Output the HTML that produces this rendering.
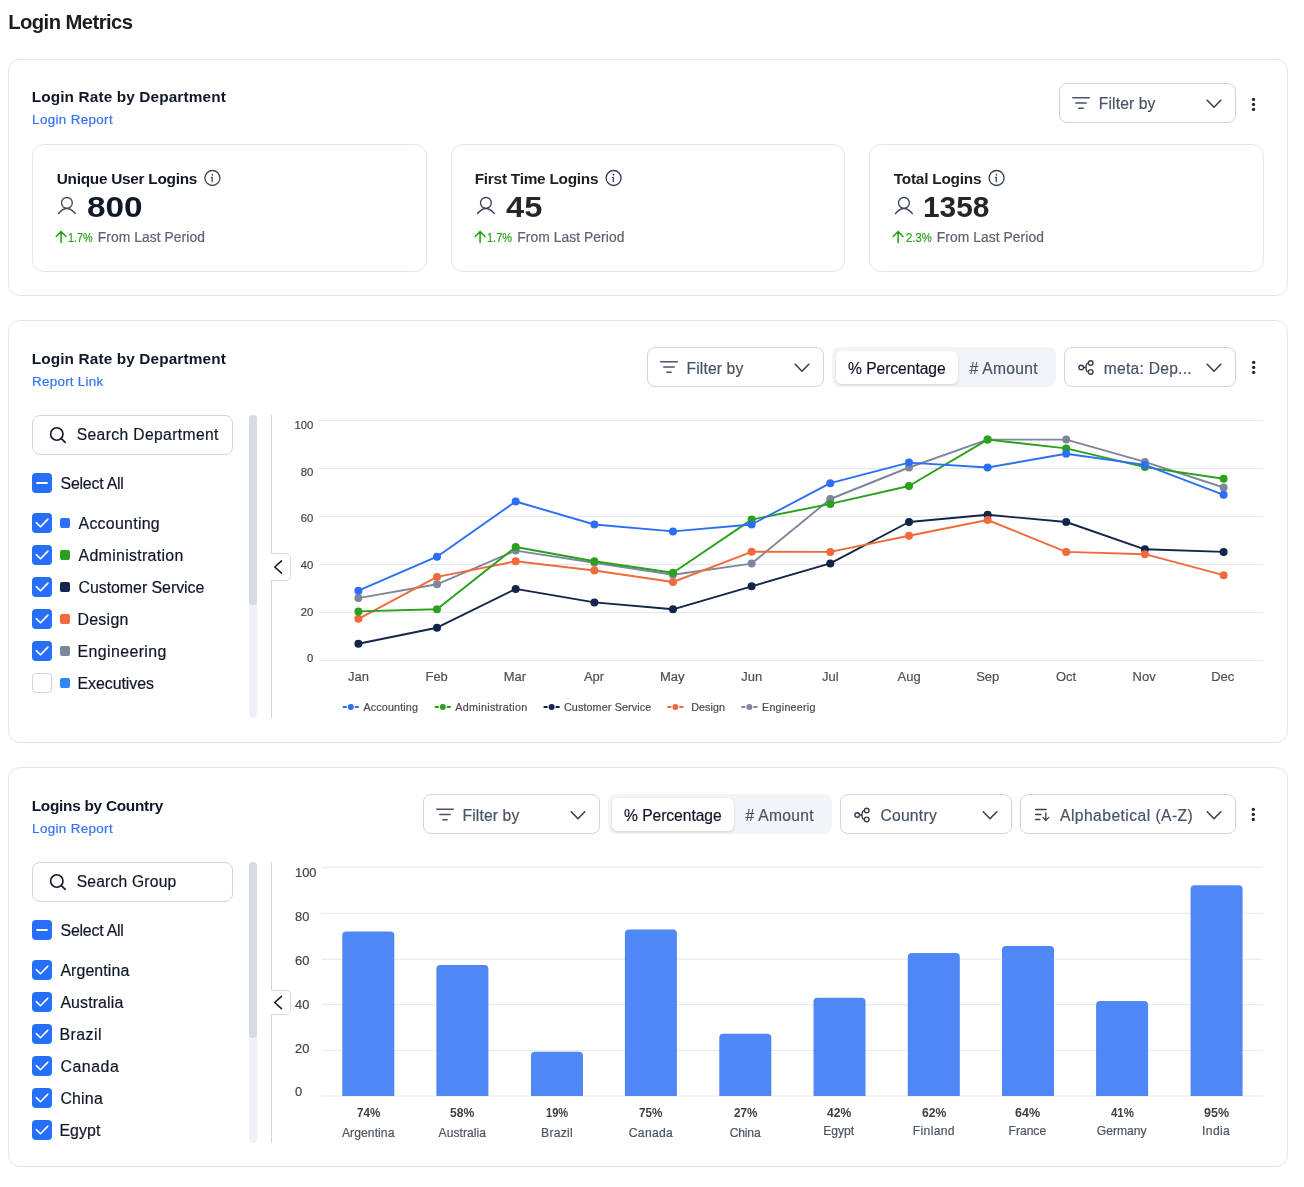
<!DOCTYPE html>
<html><head><meta charset="utf-8"><title>Login Metrics</title>
<style>
html,body{margin:0;padding:0;background:#fff;}
body{width:1304px;height:1187px;position:relative;overflow:hidden;font-family:'Liberation Sans', sans-serif;}
.t{position:absolute;white-space:nowrap;}
.r{-webkit-text-stroke:0.2px currentColor;}
svg.ov{position:absolute;left:0;top:0;}
.tl{position:absolute;left:0;top:0;width:1304px;height:1187px;will-change:transform;}
</style></head><body>
<div style="position:absolute;left:8px;top:59px;width:1280px;height:237px;box-sizing:border-box;border:1px solid #e4e4e4;border-radius:12px;background:#fff;"></div>
<div style="position:absolute;left:8px;top:320px;width:1280px;height:423px;box-sizing:border-box;border:1px solid #e4e4e4;border-radius:12px;background:#fff;"></div>
<div style="position:absolute;left:8px;top:767px;width:1280px;height:400px;box-sizing:border-box;border:1px solid #e4e4e4;border-radius:12px;background:#fff;"></div>
<div style="position:absolute;left:1059px;top:83px;width:177px;height:40px;box-sizing:border-box;border:1px solid #d0d5dd;border-radius:8px;background:#fff"></div>
<div style="position:absolute;left:32px;top:144px;width:395px;height:128px;box-sizing:border-box;border:1px solid #e4e4e4;border-radius:12px;background:#fff;"></div>
<div style="position:absolute;left:451px;top:144px;width:394px;height:128px;box-sizing:border-box;border:1px solid #e4e4e4;border-radius:12px;background:#fff;"></div>
<div style="position:absolute;left:869px;top:144px;width:395px;height:128px;box-sizing:border-box;border:1px solid #e4e4e4;border-radius:12px;background:#fff;"></div>
<div style="position:absolute;left:647px;top:347px;width:177px;height:40px;box-sizing:border-box;border:1px solid #d0d5dd;border-radius:8px;background:#fff"></div>
<div style="position:absolute;left:832px;top:347px;width:224px;height:40px;border-radius:8px;background:#f2f4f7"></div>
<div style="position:absolute;left:836px;top:351px;width:122px;height:33px;border-radius:6px;background:#fff;box-shadow:0 1px 3px rgba(16,24,40,0.10),0 1px 2px rgba(16,24,40,0.06)"></div>
<div style="position:absolute;left:1064px;top:347px;width:172px;height:40px;box-sizing:border-box;border:1px solid #d0d5dd;border-radius:8px;background:#fff"></div>
<div style="position:absolute;left:32px;top:415px;width:201px;height:40px;box-sizing:border-box;border:1px solid #d0d5dd;border-radius:8px;background:#fff"></div>
<div style="position:absolute;left:32px;top:673px;width:20px;height:20px;box-sizing:border-box;border:1px solid #d0d5dd;border-radius:4px;background:#fff"></div>
<div style="position:absolute;left:249px;top:415px;width:8px;height:303px;border-radius:4px;background:#eef1f8"></div>
<div style="position:absolute;left:249px;top:415px;width:8px;height:190px;border-radius:4px;background:#d5dae3"></div>
<div style="position:absolute;left:271px;top:415px;width:1px;height:303px;background:#d0d5dd"></div>
<div style="position:absolute;left:271px;top:553px;width:20px;height:28px;box-sizing:border-box;border:1px solid #d5d9e2;border-left:none;border-radius:0 5px 5px 0;background:#fff"></div>
<div style="position:absolute;left:423px;top:794px;width:177px;height:40px;box-sizing:border-box;border:1px solid #d0d5dd;border-radius:8px;background:#fff"></div>
<div style="position:absolute;left:608px;top:794px;width:224px;height:40px;border-radius:8px;background:#f2f4f7"></div>
<div style="position:absolute;left:612px;top:798px;width:122px;height:33px;border-radius:6px;background:#fff;box-shadow:0 1px 3px rgba(16,24,40,0.10),0 1px 2px rgba(16,24,40,0.06)"></div>
<div style="position:absolute;left:840px;top:794px;width:172px;height:40px;box-sizing:border-box;border:1px solid #d0d5dd;border-radius:8px;background:#fff"></div>
<div style="position:absolute;left:1020px;top:794px;width:216px;height:40px;box-sizing:border-box;border:1px solid #d0d5dd;border-radius:8px;background:#fff"></div>
<div style="position:absolute;left:32px;top:862px;width:201px;height:40px;box-sizing:border-box;border:1px solid #d0d5dd;border-radius:8px;background:#fff"></div>
<div style="position:absolute;left:249px;top:862px;width:8px;height:281px;border-radius:4px;background:#eef1f8"></div>
<div style="position:absolute;left:249px;top:862px;width:8px;height:176px;border-radius:4px;background:#d5dae3"></div>
<div style="position:absolute;left:271px;top:862px;width:1px;height:281px;background:#d0d5dd"></div>
<div style="position:absolute;left:271px;top:990px;width:20px;height:25px;box-sizing:border-box;border:1px solid #d5d9e2;border-left:none;border-radius:0 5px 5px 0;background:#fff"></div>
<svg class="ov" width="1304" height="1187" viewBox="0 0 1304 1187">
<g stroke="#475467" stroke-width="1.6" stroke-linecap="round"><line x1="1072.8" y1="97.8" x2="1089.2" y2="97.8"/><line x1="1075.8" y1="103" x2="1086.2" y2="103"/><line x1="1078.8" y1="108.2" x2="1083.2" y2="108.2"/></g>
<polyline points="1207.2,100.3 1214.0,107.2 1220.8,100.3" fill="none" stroke="#344054" stroke-width="1.6" stroke-linecap="round" stroke-linejoin="round"/>
<circle cx="1253.5" cy="99.4" r="1.65" fill="#262626"/><circle cx="1253.5" cy="104.4" r="1.65" fill="#262626"/><circle cx="1253.5" cy="109.4" r="1.65" fill="#262626"/>
<circle cx="212.4" cy="178" r="7.5" fill="none" stroke="#4e4643" stroke-width="1.3"/><circle cx="212.3" cy="174.7" r="0.85" fill="#4e4643"/><path d="M211.3 177.3 L212.1 177.5 V181.7" fill="none" stroke="#4e4643" stroke-width="1.3" stroke-linecap="round" stroke-linejoin="round"/>
<circle cx="66.9" cy="202.9" r="5.4" fill="none" stroke="#4e4643" stroke-width="1.3"/><path d="M58.50000000000001 213.5 Q66.9 203.5 75.30000000000001 213.5" fill="none" stroke="#4e4643" stroke-width="1.3" stroke-linecap="round"/>
<path d="M61.1 242.6 V231.6 M56.2 236.4 L61.1 231.4 L66.0 236.4" fill="none" stroke="#22a012" stroke-width="1.5" stroke-linecap="round" stroke-linejoin="round"/>
<circle cx="613.6" cy="178" r="7.5" fill="none" stroke="#344054" stroke-width="1.3"/><circle cx="613.5" cy="174.7" r="0.85" fill="#344054"/><path d="M612.5 177.3 L613.3000000000001 177.5 V181.7" fill="none" stroke="#344054" stroke-width="1.3" stroke-linecap="round" stroke-linejoin="round"/>
<circle cx="485.9" cy="202.9" r="5.4" fill="none" stroke="#344054" stroke-width="1.3"/><path d="M477.5 213.5 Q485.9 203.5 494.29999999999995 213.5" fill="none" stroke="#344054" stroke-width="1.3" stroke-linecap="round"/>
<path d="M480.1 242.6 V231.6 M475.20000000000005 236.4 L480.1 231.4 L485.0 236.4" fill="none" stroke="#22a012" stroke-width="1.5" stroke-linecap="round" stroke-linejoin="round"/>
<circle cx="996.6" cy="178" r="7.5" fill="none" stroke="#344054" stroke-width="1.3"/><circle cx="996.5" cy="174.7" r="0.85" fill="#344054"/><path d="M995.5 177.3 L996.3000000000001 177.5 V181.7" fill="none" stroke="#344054" stroke-width="1.3" stroke-linecap="round" stroke-linejoin="round"/>
<circle cx="903.9" cy="202.9" r="5.4" fill="none" stroke="#344054" stroke-width="1.3"/><path d="M895.5 213.5 Q903.9 203.5 912.3 213.5" fill="none" stroke="#344054" stroke-width="1.3" stroke-linecap="round"/>
<path d="M898.1 242.6 V231.6 M893.2 236.4 L898.1 231.4 L903.0 236.4" fill="none" stroke="#22a012" stroke-width="1.5" stroke-linecap="round" stroke-linejoin="round"/>
<g stroke="#475467" stroke-width="1.6" stroke-linecap="round"><line x1="660.8" y1="361.8" x2="677.2" y2="361.8"/><line x1="663.8" y1="367" x2="674.2" y2="367"/><line x1="666.8" y1="372.2" x2="671.2" y2="372.2"/></g>
<polyline points="795.2,364.3 802.0,371.2 808.8000000000001,364.3" fill="none" stroke="#344054" stroke-width="1.6" stroke-linecap="round" stroke-linejoin="round"/>
<g fill="none" stroke="#344054" stroke-width="1.4"><circle cx="1081.2" cy="367.5" r="2.3"/><circle cx="1090.7" cy="363.1" r="2.3"/><circle cx="1090.7" cy="371.9" r="2.3"/><path d="M1083.5 367.5 H1085.7 M1088.4 363.1 C1086.0 363.1 1086.0 367.5 1086.0 367.5 C1086.0 367.5 1086.0 371.9 1088.4 371.9"/></g>
<polyline points="1207.2,364.3 1214.0,371.2 1220.8,364.3" fill="none" stroke="#344054" stroke-width="1.6" stroke-linecap="round" stroke-linejoin="round"/>
<circle cx="1253.7" cy="362.4" r="1.65" fill="#262626"/><circle cx="1253.7" cy="367.4" r="1.65" fill="#262626"/><circle cx="1253.7" cy="372.4" r="1.65" fill="#262626"/>
<circle cx="56.8" cy="434" r="6.2" fill="none" stroke="#101828" stroke-width="1.6"/><line x1="61.4" y1="438.6" x2="65.2" y2="442.4" stroke="#101828" stroke-width="1.6" stroke-linecap="round"/>
<rect x="32" y="473" width="20" height="20" rx="4" fill="#276ef8"/><line x1="37" y1="483" x2="47" y2="483" stroke="#fff" stroke-width="1.8" stroke-linecap="round"/>
<rect x="32" y="513" width="20" height="20" rx="4" fill="#276ef8"/><polyline points="36.3,522.6 40.5,526.8 47.9,519.1" fill="none" stroke="#fff" stroke-width="1.6" stroke-linecap="round" stroke-linejoin="round"/>
<rect x="60" y="518" width="10" height="10" rx="2" fill="#2a6ff6"/>
<rect x="32" y="545" width="20" height="20" rx="4" fill="#276ef8"/><polyline points="36.3,554.6 40.5,558.8 47.9,551.1" fill="none" stroke="#fff" stroke-width="1.6" stroke-linecap="round" stroke-linejoin="round"/>
<rect x="60" y="550" width="10" height="10" rx="2" fill="#2aa01c"/>
<rect x="32" y="577" width="20" height="20" rx="4" fill="#276ef8"/><polyline points="36.3,586.6 40.5,590.8 47.9,583.1" fill="none" stroke="#fff" stroke-width="1.6" stroke-linecap="round" stroke-linejoin="round"/>
<rect x="60" y="582" width="10" height="10" rx="2" fill="#13254a"/>
<rect x="32" y="609" width="20" height="20" rx="4" fill="#276ef8"/><polyline points="36.3,618.6 40.5,622.8 47.9,615.1" fill="none" stroke="#fff" stroke-width="1.6" stroke-linecap="round" stroke-linejoin="round"/>
<rect x="60" y="614" width="10" height="10" rx="2" fill="#f06a3c"/>
<rect x="32" y="641" width="20" height="20" rx="4" fill="#276ef8"/><polyline points="36.3,650.6 40.5,654.8 47.9,647.1" fill="none" stroke="#fff" stroke-width="1.6" stroke-linecap="round" stroke-linejoin="round"/>
<rect x="60" y="646" width="10" height="10" rx="2" fill="#7d879b"/>
<rect x="60" y="678" width="10" height="10" rx="2" fill="#2e86f7"/>
<polyline points="281.5,560.9 274.7,567.0 281.5,573.1" fill="none" stroke="#101828" stroke-width="1.5" stroke-linecap="round" stroke-linejoin="round"/>
<line x1="319" y1="420.5" x2="1263" y2="420.5" stroke="#e5e7eb" stroke-width="1"/>
<line x1="319" y1="468.5" x2="1263" y2="468.5" stroke="#e5e7eb" stroke-width="1"/>
<line x1="319" y1="516.5" x2="1263" y2="516.5" stroke="#e5e7eb" stroke-width="1"/>
<line x1="319" y1="564.5" x2="1263" y2="564.5" stroke="#e5e7eb" stroke-width="1"/>
<line x1="319" y1="612.5" x2="1263" y2="612.5" stroke="#e5e7eb" stroke-width="1"/>
<line x1="319" y1="660.5" x2="1263" y2="660.5" stroke="#e5e7eb" stroke-width="1"/>
<polyline points="358.4,598.1 437.0,584.3 515.7,550.6 594.4,562.8 673.0,574.8 751.6,563.6 830.3,499.0 909.0,467.5 987.6,439.6 1066.2,439.6 1144.9,461.9 1223.6,487.5" fill="none" stroke="#7d879b" stroke-width="1.9" stroke-linejoin="round"/>
<circle cx="358.4" cy="598.1" r="4" fill="#7d879b"/><circle cx="437.0" cy="584.3" r="4" fill="#7d879b"/><circle cx="515.7" cy="550.6" r="4" fill="#7d879b"/><circle cx="594.4" cy="562.8" r="4" fill="#7d879b"/><circle cx="673.0" cy="574.8" r="4" fill="#7d879b"/><circle cx="751.6" cy="563.6" r="4" fill="#7d879b"/><circle cx="830.3" cy="499.0" r="4" fill="#7d879b"/><circle cx="909.0" cy="467.5" r="4" fill="#7d879b"/><circle cx="987.6" cy="439.6" r="4" fill="#7d879b"/><circle cx="1066.2" cy="439.6" r="4" fill="#7d879b"/><circle cx="1144.9" cy="461.9" r="4" fill="#7d879b"/><circle cx="1223.6" cy="487.5" r="4" fill="#7d879b"/>
<polyline points="358.4,643.8 437.0,627.7 515.7,588.9 594.4,602.4 673.0,609.3 751.6,586.3 830.3,563.4 909.0,522.0 987.6,514.8 1066.2,522.0 1144.9,549.3 1223.6,551.9" fill="none" stroke="#13254a" stroke-width="1.9" stroke-linejoin="round"/>
<circle cx="358.4" cy="643.8" r="4" fill="#13254a"/><circle cx="437.0" cy="627.7" r="4" fill="#13254a"/><circle cx="515.7" cy="588.9" r="4" fill="#13254a"/><circle cx="594.4" cy="602.4" r="4" fill="#13254a"/><circle cx="673.0" cy="609.3" r="4" fill="#13254a"/><circle cx="751.6" cy="586.3" r="4" fill="#13254a"/><circle cx="830.3" cy="563.4" r="4" fill="#13254a"/><circle cx="909.0" cy="522.0" r="4" fill="#13254a"/><circle cx="987.6" cy="514.8" r="4" fill="#13254a"/><circle cx="1066.2" cy="522.0" r="4" fill="#13254a"/><circle cx="1144.9" cy="549.3" r="4" fill="#13254a"/><circle cx="1223.6" cy="551.9" r="4" fill="#13254a"/>
<polyline points="358.4,618.8 437.0,576.9 515.7,561.3 594.4,570.5 673.0,582.0 751.6,551.8 830.3,551.9 909.0,535.8 987.6,520.0 1066.2,551.9 1144.9,554.2 1223.6,575.2" fill="none" stroke="#f06a3c" stroke-width="1.9" stroke-linejoin="round"/>
<circle cx="358.4" cy="618.8" r="4" fill="#f06a3c"/><circle cx="437.0" cy="576.9" r="4" fill="#f06a3c"/><circle cx="515.7" cy="561.3" r="4" fill="#f06a3c"/><circle cx="594.4" cy="570.5" r="4" fill="#f06a3c"/><circle cx="673.0" cy="582.0" r="4" fill="#f06a3c"/><circle cx="751.6" cy="551.8" r="4" fill="#f06a3c"/><circle cx="830.3" cy="551.9" r="4" fill="#f06a3c"/><circle cx="909.0" cy="535.8" r="4" fill="#f06a3c"/><circle cx="987.6" cy="520.0" r="4" fill="#f06a3c"/><circle cx="1066.2" cy="551.9" r="4" fill="#f06a3c"/><circle cx="1144.9" cy="554.2" r="4" fill="#f06a3c"/><circle cx="1223.6" cy="575.2" r="4" fill="#f06a3c"/>
<polyline points="358.4,611.4 437.0,609.3 515.7,547.0 594.4,561.3 673.0,572.8 751.6,519.6 830.3,503.9 909.0,486.0 987.6,439.6 1066.2,448.4 1144.9,467.1 1223.6,478.7" fill="none" stroke="#2aa01c" stroke-width="1.9" stroke-linejoin="round"/>
<circle cx="358.4" cy="611.4" r="4" fill="#2aa01c"/><circle cx="437.0" cy="609.3" r="4" fill="#2aa01c"/><circle cx="515.7" cy="547.0" r="4" fill="#2aa01c"/><circle cx="594.4" cy="561.3" r="4" fill="#2aa01c"/><circle cx="673.0" cy="572.8" r="4" fill="#2aa01c"/><circle cx="751.6" cy="519.6" r="4" fill="#2aa01c"/><circle cx="830.3" cy="503.9" r="4" fill="#2aa01c"/><circle cx="909.0" cy="486.0" r="4" fill="#2aa01c"/><circle cx="987.6" cy="439.6" r="4" fill="#2aa01c"/><circle cx="1066.2" cy="448.4" r="4" fill="#2aa01c"/><circle cx="1144.9" cy="467.1" r="4" fill="#2aa01c"/><circle cx="1223.6" cy="478.7" r="4" fill="#2aa01c"/>
<polyline points="358.4,590.7 437.0,556.7 515.7,501.5 594.4,524.5 673.0,531.4 751.6,524.5 830.3,483.2 909.0,462.6 987.6,467.5 1066.2,453.7 1144.9,464.9 1223.6,494.8" fill="none" stroke="#2a6ff6" stroke-width="1.9" stroke-linejoin="round"/>
<circle cx="358.4" cy="590.7" r="4" fill="#2a6ff6"/><circle cx="437.0" cy="556.7" r="4" fill="#2a6ff6"/><circle cx="515.7" cy="501.5" r="4" fill="#2a6ff6"/><circle cx="594.4" cy="524.5" r="4" fill="#2a6ff6"/><circle cx="673.0" cy="531.4" r="4" fill="#2a6ff6"/><circle cx="751.6" cy="524.5" r="4" fill="#2a6ff6"/><circle cx="830.3" cy="483.2" r="4" fill="#2a6ff6"/><circle cx="909.0" cy="462.6" r="4" fill="#2a6ff6"/><circle cx="987.6" cy="467.5" r="4" fill="#2a6ff6"/><circle cx="1066.2" cy="453.7" r="4" fill="#2a6ff6"/><circle cx="1144.9" cy="464.9" r="4" fill="#2a6ff6"/><circle cx="1223.6" cy="494.8" r="4" fill="#2a6ff6"/>
<g stroke="#2a6ff6" stroke-width="2"><line x1="342.8" y1="707" x2="346.8" y2="707"/><line x1="354.8" y1="707" x2="358.8" y2="707"/></g><circle cx="350.8" cy="707" r="3" fill="#2a6ff6"/>
<g stroke="#2aa01c" stroke-width="2"><line x1="434.8" y1="707" x2="438.8" y2="707"/><line x1="446.8" y1="707" x2="450.8" y2="707"/></g><circle cx="442.8" cy="707" r="3" fill="#2aa01c"/>
<g stroke="#13254a" stroke-width="2"><line x1="543.6" y1="707" x2="547.6" y2="707"/><line x1="555.6" y1="707" x2="559.6" y2="707"/></g><circle cx="551.6" cy="707" r="3" fill="#13254a"/>
<g stroke="#f06a3c" stroke-width="2"><line x1="667.4" y1="707" x2="671.4" y2="707"/><line x1="679.4" y1="707" x2="683.4" y2="707"/></g><circle cx="675.4" cy="707" r="3" fill="#f06a3c"/>
<g stroke="#7d879b" stroke-width="2"><line x1="741.4" y1="707" x2="745.4" y2="707"/><line x1="753.4" y1="707" x2="757.4" y2="707"/></g><circle cx="749.4" cy="707" r="3" fill="#7d879b"/>
<g stroke="#475467" stroke-width="1.6" stroke-linecap="round"><line x1="436.8" y1="809.3" x2="453.2" y2="809.3"/><line x1="439.8" y1="814.5" x2="450.2" y2="814.5"/><line x1="442.8" y1="819.7" x2="447.2" y2="819.7"/></g>
<polyline points="571.2,811.8 578.0,818.6999999999999 584.8000000000001,811.8" fill="none" stroke="#344054" stroke-width="1.6" stroke-linecap="round" stroke-linejoin="round"/>
<g fill="none" stroke="#344054" stroke-width="1.4"><circle cx="857.2" cy="815" r="2.3"/><circle cx="866.7" cy="810.6" r="2.3"/><circle cx="866.7" cy="819.4" r="2.3"/><path d="M859.5 815 H861.7 M864.4000000000001 810.6 C862.0 810.6 862.0 815 862.0 815 C862.0 815 862.0 819.4 864.4000000000001 819.4"/></g>
<polyline points="983.2,811.8 990.0,818.6999999999999 996.8000000000001,811.8" fill="none" stroke="#344054" stroke-width="1.6" stroke-linecap="round" stroke-linejoin="round"/>
<g fill="none" stroke="#344054" stroke-width="1.3" stroke-linecap="round" stroke-linejoin="round"><line x1="1035.6" y1="809.5" x2="1046.2" y2="809.5"/><line x1="1035.6" y1="814.5" x2="1041" y2="814.5"/><line x1="1035.6" y1="819.5" x2="1040" y2="819.5"/><path d="M1045.8 812.8 V820.4 M1042.9 817.4 L1045.8 820.4 L1048.8 817.4"/></g>
<polyline points="1207.2,811.8 1214.0,818.6999999999999 1220.8,811.8" fill="none" stroke="#344054" stroke-width="1.6" stroke-linecap="round" stroke-linejoin="round"/>
<circle cx="1253.3" cy="809.4" r="1.65" fill="#262626"/><circle cx="1253.3" cy="814.4" r="1.65" fill="#262626"/><circle cx="1253.3" cy="819.4" r="1.65" fill="#262626"/>
<circle cx="56.8" cy="881" r="6.2" fill="none" stroke="#101828" stroke-width="1.6"/><line x1="61.4" y1="885.6" x2="65.2" y2="889.4" stroke="#101828" stroke-width="1.6" stroke-linecap="round"/>
<rect x="32" y="920" width="20" height="20" rx="4" fill="#276ef8"/><line x1="37" y1="930" x2="47" y2="930" stroke="#fff" stroke-width="1.8" stroke-linecap="round"/>
<rect x="32" y="960" width="20" height="20" rx="4" fill="#276ef8"/><polyline points="36.3,969.6 40.5,973.8 47.9,966.1" fill="none" stroke="#fff" stroke-width="1.6" stroke-linecap="round" stroke-linejoin="round"/>
<rect x="32" y="992" width="20" height="20" rx="4" fill="#276ef8"/><polyline points="36.3,1001.6 40.5,1005.8 47.9,998.1" fill="none" stroke="#fff" stroke-width="1.6" stroke-linecap="round" stroke-linejoin="round"/>
<rect x="32" y="1024" width="20" height="20" rx="4" fill="#276ef8"/><polyline points="36.3,1033.6 40.5,1037.8 47.9,1030.1" fill="none" stroke="#fff" stroke-width="1.6" stroke-linecap="round" stroke-linejoin="round"/>
<rect x="32" y="1056" width="20" height="20" rx="4" fill="#276ef8"/><polyline points="36.3,1065.6 40.5,1069.8 47.9,1062.1" fill="none" stroke="#fff" stroke-width="1.6" stroke-linecap="round" stroke-linejoin="round"/>
<rect x="32" y="1088" width="20" height="20" rx="4" fill="#276ef8"/><polyline points="36.3,1097.6 40.5,1101.8 47.9,1094.1" fill="none" stroke="#fff" stroke-width="1.6" stroke-linecap="round" stroke-linejoin="round"/>
<rect x="32" y="1120" width="20" height="20" rx="4" fill="#276ef8"/><polyline points="36.3,1129.6 40.5,1133.8 47.9,1126.1" fill="none" stroke="#fff" stroke-width="1.6" stroke-linecap="round" stroke-linejoin="round"/>
<polyline points="281.5,996.4 274.7,1002.5 281.5,1008.6" fill="none" stroke="#101828" stroke-width="1.5" stroke-linecap="round" stroke-linejoin="round"/>
<line x1="321.6" y1="867.2" x2="1263" y2="867.2" stroke="#e5e7eb" stroke-width="1"/>
<line x1="321.6" y1="913.2" x2="1263" y2="913.2" stroke="#e5e7eb" stroke-width="1"/>
<line x1="321.6" y1="959.2" x2="1263" y2="959.2" stroke="#e5e7eb" stroke-width="1"/>
<line x1="321.6" y1="1004.7" x2="1263" y2="1004.7" stroke="#e5e7eb" stroke-width="1"/>
<line x1="321.6" y1="1050.4" x2="1263" y2="1050.4" stroke="#e5e7eb" stroke-width="1"/>
<line x1="321.6" y1="1096" x2="1263" y2="1096" stroke="#e5e7eb" stroke-width="1"/>
<path d="M342.3 1096 V935.4 Q342.3 931.4 346.3 931.4 H390.3 Q394.3 931.4 394.3 935.4 V1096 Z" fill="#4f87f6"/>
<path d="M436.4 1096 V969 Q436.4 965 440.4 965 H484.4 Q488.4 965 488.4 969 V1096 Z" fill="#4f87f6"/>
<path d="M531 1096 V1055.7 Q531 1051.7 535 1051.7 H579 Q583 1051.7 583 1055.7 V1096 Z" fill="#4f87f6"/>
<path d="M624.9 1096 V933.4 Q624.9 929.4 628.9 929.4 H672.9 Q676.9 929.4 676.9 933.4 V1096 Z" fill="#4f87f6"/>
<path d="M719.3 1096 V1037.7 Q719.3 1033.7 723.3 1033.7 H767.3 Q771.3 1033.7 771.3 1037.7 V1096 Z" fill="#4f87f6"/>
<path d="M813.5 1096 V1001.8 Q813.5 997.8 817.5 997.8 H861.5 Q865.5 997.8 865.5 1001.8 V1096 Z" fill="#4f87f6"/>
<path d="M907.8 1096 V956.9 Q907.8 952.9 911.8 952.9 H955.8 Q959.8 952.9 959.8 956.9 V1096 Z" fill="#4f87f6"/>
<path d="M1002 1096 V949.9 Q1002 945.9 1006 945.9 H1050 Q1054 945.9 1054 949.9 V1096 Z" fill="#4f87f6"/>
<path d="M1096.1 1096 V1005.1 Q1096.1 1001.1 1100.1 1001.1 H1144.1 Q1148.1 1001.1 1148.1 1005.1 V1096 Z" fill="#4f87f6"/>
<path d="M1190.6 1096 V889.2 Q1190.6 885.2 1194.6 885.2 H1238.6 Q1242.6 885.2 1242.6 889.2 V1096 Z" fill="#4f87f6"/>
</svg>
<div class="tl">
<div class="t" style="left:8.20px;top:11.95px;font-size:20.251px;line-height:20.251px;font-weight:700;color:#1c1c1e;letter-spacing:-0.573px;">Login Metrics</div>
<div class="t" style="left:31.70px;top:88.89px;font-size:15.363px;line-height:15.363px;font-weight:700;color:#101828;letter-spacing:0.128px;">Login Rate by Department</div>
<div class="t r" style="left:32.10px;top:113.45px;font-size:13.408px;line-height:13.408px;font-weight:400;color:#3373f4;letter-spacing:0.350px;">Login Report</div>
<div class="t r" style="left:1098.80px;top:96.06px;font-size:15.642px;line-height:15.642px;font-weight:400;color:#475467;letter-spacing:0.131px;">Filter by</div>
<div class="t" style="left:56.70px;top:170.99px;font-size:15.363px;line-height:15.363px;font-weight:700;color:#101828;letter-spacing:-0.261px;">Unique User Logins</div>
<div class="t" style="left:87.00px;top:193.32px;font-size:28.911px;line-height:28.911px;font-weight:700;color:#101828;letter-spacing:0.000px;transform:scaleX(1.1537);transform-origin:0 0;">800</div>
<div class="t r" style="left:67.98px;top:231.48px;font-size:13.128px;line-height:13.128px;font-weight:400;color:#26a116;letter-spacing:0.000px;transform:scaleX(0.8212);transform-origin:0 0;">1.7%</div>
<div class="t r" style="left:97.80px;top:231.09px;font-size:13.827px;line-height:13.827px;font-weight:400;color:#5b6270;letter-spacing:0.077px;">From Last Period</div>
<div class="t" style="left:474.70px;top:170.99px;font-size:15.363px;line-height:15.363px;font-weight:700;color:#1f1f1f;letter-spacing:-0.243px;">First Time Logins</div>
<div class="t" style="left:506.00px;top:193.32px;font-size:28.911px;line-height:28.911px;font-weight:700;color:#262626;letter-spacing:0.000px;transform:scaleX(1.1286);transform-origin:0 0;">45</div>
<div class="t r" style="left:486.96px;top:231.48px;font-size:13.128px;line-height:13.128px;font-weight:400;color:#26a116;letter-spacing:0.000px;transform:scaleX(0.8384);transform-origin:0 0;">1.7%</div>
<div class="t r" style="left:517.30px;top:231.09px;font-size:13.827px;line-height:13.827px;font-weight:400;color:#5b6270;letter-spacing:0.077px;">From Last Period</div>
<div class="t" style="left:893.70px;top:170.99px;font-size:15.363px;line-height:15.363px;font-weight:700;color:#1f1f1f;letter-spacing:-0.210px;">Total Logins</div>
<div class="t" style="left:922.97px;top:193.32px;font-size:28.911px;line-height:28.911px;font-weight:700;color:#262626;letter-spacing:0.000px;transform:scaleX(1.0312);transform-origin:0 0;">1358</div>
<div class="t r" style="left:905.80px;top:231.48px;font-size:13.128px;line-height:13.128px;font-weight:400;color:#26a116;letter-spacing:0.000px;transform:scaleX(0.8602);transform-origin:0 0;">2.3%</div>
<div class="t r" style="left:936.80px;top:231.09px;font-size:13.827px;line-height:13.827px;font-weight:400;color:#5b6270;letter-spacing:0.077px;">From Last Period</div>
<div class="t" style="left:31.70px;top:350.99px;font-size:15.363px;line-height:15.363px;font-weight:700;color:#101828;letter-spacing:0.128px;">Login Rate by Department</div>
<div class="t r" style="left:32.10px;top:375.05px;font-size:13.408px;line-height:13.408px;font-weight:400;color:#3373f4;letter-spacing:0.262px;">Report Link</div>
<div class="t r" style="left:686.60px;top:360.56px;font-size:15.642px;line-height:15.642px;font-weight:400;color:#475467;letter-spacing:0.131px;">Filter by</div>
<div class="t r" style="left:848.00px;top:360.56px;font-size:15.642px;line-height:15.642px;font-weight:400;color:#101828;letter-spacing:-0.042px;">% Percentage</div>
<div class="t r" style="left:969.50px;top:360.56px;font-size:15.642px;line-height:15.642px;font-weight:400;color:#475467;letter-spacing:0.280px;"># Amount</div>
<div class="t r" style="left:1103.80px;top:360.56px;font-size:15.642px;line-height:15.642px;font-weight:400;color:#475467;letter-spacing:0.249px;">meta: Dep...</div>
<div class="t r" style="left:76.70px;top:427.46px;font-size:15.642px;line-height:15.642px;font-weight:400;color:#101828;letter-spacing:0.391px;">Search Department</div>
<div class="t r" style="left:60.60px;top:475.72px;font-size:15.922px;line-height:15.922px;font-weight:400;color:#101828;letter-spacing:-0.241px;">Select All</div>
<div class="t r" style="left:78.50px;top:515.72px;font-size:15.922px;line-height:15.922px;font-weight:400;color:#101828;letter-spacing:0.272px;">Accounting</div>
<div class="t r" style="left:78.50px;top:547.72px;font-size:15.922px;line-height:15.922px;font-weight:400;color:#101828;letter-spacing:0.313px;">Administration</div>
<div class="t r" style="left:78.50px;top:579.72px;font-size:15.922px;line-height:15.922px;font-weight:400;color:#101828;letter-spacing:-0.037px;">Customer Service</div>
<div class="t r" style="left:77.50px;top:611.72px;font-size:15.922px;line-height:15.922px;font-weight:400;color:#101828;letter-spacing:0.267px;">Design</div>
<div class="t r" style="left:77.50px;top:643.72px;font-size:15.922px;line-height:15.922px;font-weight:400;color:#101828;letter-spacing:0.395px;">Engineering</div>
<div class="t r" style="left:77.50px;top:675.72px;font-size:15.922px;line-height:15.922px;font-weight:400;color:#101828;letter-spacing:-0.051px;">Executives</div>
<div class="t r" style="left:294.43px;top:419.72px;font-size:11.313px;line-height:11.313px;font-weight:400;color:#444444;letter-spacing:0.000px;">100</div>
<div class="t r" style="left:300.72px;top:466.52px;font-size:11.313px;line-height:11.313px;font-weight:400;color:#444444;letter-spacing:0.000px;">80</div>
<div class="t r" style="left:300.72px;top:513.22px;font-size:11.313px;line-height:11.313px;font-weight:400;color:#444444;letter-spacing:0.000px;">60</div>
<div class="t r" style="left:300.72px;top:559.82px;font-size:11.313px;line-height:11.313px;font-weight:400;color:#444444;letter-spacing:0.000px;">40</div>
<div class="t r" style="left:300.72px;top:606.72px;font-size:11.313px;line-height:11.313px;font-weight:400;color:#444444;letter-spacing:0.000px;">20</div>
<div class="t r" style="left:307.00px;top:653.42px;font-size:11.313px;line-height:11.313px;font-weight:400;color:#444444;letter-spacing:0.000px;">0</div>
<div class="t r" style="left:348.05px;top:669.80px;font-size:12.989px;line-height:12.989px;font-weight:400;color:#505050;letter-spacing:0.000px;">Jan</div>
<div class="t r" style="left:425.48px;top:669.80px;font-size:12.989px;line-height:12.989px;font-weight:400;color:#505050;letter-spacing:0.000px;">Feb</div>
<div class="t r" style="left:503.69px;top:669.80px;font-size:12.989px;line-height:12.989px;font-weight:400;color:#505050;letter-spacing:0.000px;">Mar</div>
<div class="t r" style="left:583.92px;top:669.80px;font-size:12.989px;line-height:12.989px;font-weight:400;color:#505050;letter-spacing:0.000px;">Apr</div>
<div class="t r" style="left:659.99px;top:669.80px;font-size:12.989px;line-height:12.989px;font-weight:400;color:#505050;letter-spacing:0.000px;">May</div>
<div class="t r" style="left:741.30px;top:669.80px;font-size:12.989px;line-height:12.989px;font-weight:400;color:#505050;letter-spacing:0.000px;">Jun</div>
<div class="t r" style="left:821.95px;top:669.80px;font-size:12.989px;line-height:12.989px;font-weight:400;color:#505050;letter-spacing:0.000px;">Jul</div>
<div class="t r" style="left:897.52px;top:669.80px;font-size:12.989px;line-height:12.989px;font-weight:400;color:#505050;letter-spacing:0.000px;">Aug</div>
<div class="t r" style="left:976.17px;top:669.80px;font-size:12.989px;line-height:12.989px;font-weight:400;color:#505050;letter-spacing:0.000px;">Sep</div>
<div class="t r" style="left:1055.96px;top:669.80px;font-size:12.989px;line-height:12.989px;font-weight:400;color:#505050;letter-spacing:0.000px;">Oct</div>
<div class="t r" style="left:1132.61px;top:669.80px;font-size:12.989px;line-height:12.989px;font-weight:400;color:#505050;letter-spacing:0.000px;">Nov</div>
<div class="t r" style="left:1211.26px;top:669.80px;font-size:12.989px;line-height:12.989px;font-weight:400;color:#505050;letter-spacing:0.000px;">Dec</div>
<div class="t r" style="left:363.40px;top:702.19px;font-size:10.754px;line-height:10.754px;font-weight:400;color:#4a4a4a;letter-spacing:0.154px;">Accounting</div>
<div class="t r" style="left:455.20px;top:702.19px;font-size:10.754px;line-height:10.754px;font-weight:400;color:#4a4a4a;letter-spacing:0.305px;">Administration</div>
<div class="t r" style="left:563.90px;top:702.19px;font-size:10.754px;line-height:10.754px;font-weight:400;color:#4a4a4a;letter-spacing:0.130px;">Customer Service</div>
<div class="t r" style="left:691.20px;top:702.19px;font-size:10.754px;line-height:10.754px;font-weight:400;color:#4a4a4a;letter-spacing:0.063px;">Design</div>
<div class="t r" style="left:762.00px;top:702.19px;font-size:10.754px;line-height:10.754px;font-weight:400;color:#4a4a4a;letter-spacing:0.220px;">Engineerig</div>
<div class="t" style="left:31.70px;top:798.19px;font-size:15.363px;line-height:15.363px;font-weight:700;color:#101828;letter-spacing:-0.258px;">Logins by Country</div>
<div class="t r" style="left:32.10px;top:822.35px;font-size:13.408px;line-height:13.408px;font-weight:400;color:#3373f4;letter-spacing:0.350px;">Login Report</div>
<div class="t r" style="left:462.60px;top:807.96px;font-size:15.642px;line-height:15.642px;font-weight:400;color:#475467;letter-spacing:0.131px;">Filter by</div>
<div class="t r" style="left:624.00px;top:807.96px;font-size:15.642px;line-height:15.642px;font-weight:400;color:#101828;letter-spacing:-0.042px;">% Percentage</div>
<div class="t r" style="left:745.50px;top:807.96px;font-size:15.642px;line-height:15.642px;font-weight:400;color:#475467;letter-spacing:0.280px;"># Amount</div>
<div class="t r" style="left:880.40px;top:807.96px;font-size:15.642px;line-height:15.642px;font-weight:400;color:#475467;letter-spacing:0.267px;">Country</div>
<div class="t r" style="left:1060.00px;top:807.96px;font-size:15.642px;line-height:15.642px;font-weight:400;color:#475467;letter-spacing:0.456px;">Alphabetical (A-Z)</div>
<div class="t r" style="left:76.70px;top:874.46px;font-size:15.642px;line-height:15.642px;font-weight:400;color:#101828;letter-spacing:0.210px;">Search Group</div>
<div class="t r" style="left:60.60px;top:922.72px;font-size:15.922px;line-height:15.922px;font-weight:400;color:#101828;letter-spacing:-0.241px;">Select All</div>
<div class="t r" style="left:60.40px;top:962.72px;font-size:15.922px;line-height:15.922px;font-weight:400;color:#101828;letter-spacing:0.094px;">Argentina</div>
<div class="t r" style="left:60.40px;top:994.72px;font-size:15.922px;line-height:15.922px;font-weight:400;color:#101828;letter-spacing:0.120px;">Australia</div>
<div class="t r" style="left:59.40px;top:1026.72px;font-size:15.922px;line-height:15.922px;font-weight:400;color:#101828;letter-spacing:0.452px;">Brazil</div>
<div class="t r" style="left:60.40px;top:1058.72px;font-size:15.922px;line-height:15.922px;font-weight:400;color:#101828;letter-spacing:0.526px;">Canada</div>
<div class="t r" style="left:60.40px;top:1090.72px;font-size:15.922px;line-height:15.922px;font-weight:400;color:#101828;letter-spacing:0.197px;">China</div>
<div class="t r" style="left:59.40px;top:1122.72px;font-size:15.922px;line-height:15.922px;font-weight:400;color:#101828;letter-spacing:0.061px;">Egypt</div>
<div class="t r" style="left:295.00px;top:866.92px;font-size:12.849px;line-height:12.849px;font-weight:400;color:#444444;letter-spacing:0.000px;">100</div>
<div class="t r" style="left:295.00px;top:911.12px;font-size:12.849px;line-height:12.849px;font-weight:400;color:#444444;letter-spacing:0.000px;">80</div>
<div class="t r" style="left:295.00px;top:954.82px;font-size:12.849px;line-height:12.849px;font-weight:400;color:#444444;letter-spacing:0.000px;">60</div>
<div class="t r" style="left:295.00px;top:998.82px;font-size:12.849px;line-height:12.849px;font-weight:400;color:#444444;letter-spacing:0.000px;">40</div>
<div class="t r" style="left:295.00px;top:1042.52px;font-size:12.849px;line-height:12.849px;font-weight:400;color:#444444;letter-spacing:0.000px;">20</div>
<div class="t r" style="left:295.00px;top:1086.32px;font-size:12.849px;line-height:12.849px;font-weight:400;color:#444444;letter-spacing:0.000px;">0</div>
<div class="t" style="left:356.65px;top:1105.95px;font-size:13.408px;line-height:13.408px;font-weight:700;color:#404040;letter-spacing:0.000px;transform:scaleX(0.8663);transform-origin:0 0;">74%</div>
<div class="t r" style="left:341.90px;top:1127.11px;font-size:12.151px;line-height:12.151px;font-weight:400;color:#4b5563;letter-spacing:0.073px;">Argentina</div>
<div class="t" style="left:450.15px;top:1105.95px;font-size:13.408px;line-height:13.408px;font-weight:700;color:#404040;letter-spacing:0.000px;transform:scaleX(0.9110);transform-origin:0 0;">58%</div>
<div class="t r" style="left:438.60px;top:1127.11px;font-size:12.151px;line-height:12.151px;font-weight:400;color:#4b5563;letter-spacing:0.015px;">Australia</div>
<div class="t" style="left:545.90px;top:1105.95px;font-size:13.408px;line-height:13.408px;font-weight:700;color:#404040;letter-spacing:0.000px;transform:scaleX(0.8254);transform-origin:0 0;">19%</div>
<div class="t r" style="left:541.10px;top:1127.11px;font-size:12.151px;line-height:12.151px;font-weight:400;color:#4b5563;letter-spacing:0.228px;">Brazil</div>
<div class="t" style="left:639.15px;top:1105.95px;font-size:13.408px;line-height:13.408px;font-weight:700;color:#404040;letter-spacing:0.000px;transform:scaleX(0.8738);transform-origin:0 0;">75%</div>
<div class="t r" style="left:628.80px;top:1127.11px;font-size:12.151px;line-height:12.151px;font-weight:400;color:#4b5563;letter-spacing:0.285px;">Canada</div>
<div class="t" style="left:733.55px;top:1105.95px;font-size:13.408px;line-height:13.408px;font-weight:700;color:#404040;letter-spacing:0.000px;transform:scaleX(0.8738);transform-origin:0 0;">27%</div>
<div class="t r" style="left:729.70px;top:1127.11px;font-size:12.151px;line-height:12.151px;font-weight:400;color:#4b5563;letter-spacing:-0.192px;">China</div>
<div class="t" style="left:827.35px;top:1105.95px;font-size:13.408px;line-height:13.408px;font-weight:700;color:#404040;letter-spacing:0.000px;transform:scaleX(0.9035);transform-origin:0 0;">42%</div>
<div class="t r" style="left:823.30px;top:1125.31px;font-size:12.151px;line-height:12.151px;font-weight:400;color:#4b5563;letter-spacing:-0.068px;">Egypt</div>
<div class="t" style="left:921.55px;top:1105.95px;font-size:13.408px;line-height:13.408px;font-weight:700;color:#404040;letter-spacing:0.000px;transform:scaleX(0.9110);transform-origin:0 0;">62%</div>
<div class="t r" style="left:912.85px;top:1125.31px;font-size:12.151px;line-height:12.151px;font-weight:400;color:#4b5563;letter-spacing:0.306px;">Finland</div>
<div class="t" style="left:1015.40px;top:1105.95px;font-size:13.408px;line-height:13.408px;font-weight:700;color:#404040;letter-spacing:0.000px;transform:scaleX(0.9370);transform-origin:0 0;">64%</div>
<div class="t r" style="left:1008.60px;top:1125.31px;font-size:12.151px;line-height:12.151px;font-weight:400;color:#4b5563;letter-spacing:-0.047px;">France</div>
<div class="t" style="left:1110.60px;top:1105.95px;font-size:13.408px;line-height:13.408px;font-weight:700;color:#404040;letter-spacing:0.000px;transform:scaleX(0.8552);transform-origin:0 0;">41%</div>
<div class="t r" style="left:1096.80px;top:1125.31px;font-size:12.151px;line-height:12.151px;font-weight:400;color:#4b5563;letter-spacing:-0.043px;">Germany</div>
<div class="t" style="left:1204.00px;top:1105.95px;font-size:13.408px;line-height:13.408px;font-weight:700;color:#404040;letter-spacing:0.000px;transform:scaleX(0.9370);transform-origin:0 0;">95%</div>
<div class="t r" style="left:1202.10px;top:1125.31px;font-size:12.151px;line-height:12.151px;font-weight:400;color:#4b5563;letter-spacing:0.356px;">India</div>
</div>
</body></html>
